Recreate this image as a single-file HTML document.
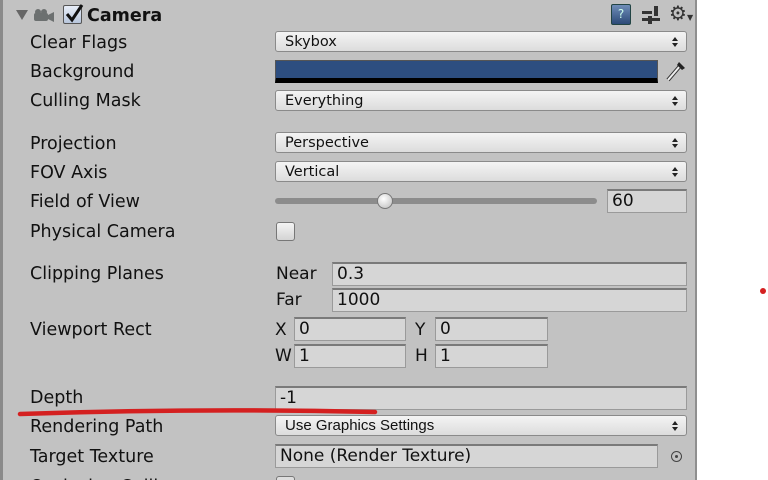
<!DOCTYPE html>
<html><head><meta charset="utf-8"><style>
*{margin:0;padding:0;box-sizing:border-box}
html,body{width:768px;height:480px;overflow:hidden}
body{background:#fff;position:relative;font-family:"DejaVu Sans","Liberation Sans",sans-serif;color:#111}
#panel{position:absolute;left:0;top:0;width:697px;height:480px;background:#c2c2c2;border-left:3px solid #8a8a8a;border-right:2px solid #8f8f8f}
.l{position:absolute;left:30px;font-size:17.5px;line-height:20px;white-space:nowrap}
.dd{position:absolute;left:275px;width:412px;height:21px;border:1px solid #8a8a8a;border-radius:3px;background:linear-gradient(#f4f4f4,#dcdcdc);font-size:14.5px;line-height:20px;padding-left:9px}
.dd:after{content:"";position:absolute;right:8px;top:5px;width:0;height:0;border-left:3px solid transparent;border-right:3px solid transparent;border-bottom:4px solid #222}
.dd:before{content:"";position:absolute;right:8px;top:11px;width:0;height:0;border-left:3px solid transparent;border-right:3px solid transparent;border-top:4px solid #222}
.f{position:absolute;height:24px;background:#d6d6d6;border:1px solid #9a9a9a;border-top:2px solid #7a7a7a;font-size:17px;line-height:21px;padding-left:4px}
.s{position:absolute;font-size:17px;line-height:20px}
</style></head><body>
<div id="panel"></div>
<div style="position:absolute;left:16px;top:10px;width:0;height:0;border-left:6px solid transparent;border-right:6px solid transparent;border-top:10px solid #666"></div>
<svg style="position:absolute;left:32px;top:8px" width="24" height="16"><rect x="2" y="5" width="14" height="8" rx="2" fill="#6c7070"/><circle cx="6" cy="4" r="3" fill="#6c7070"/><circle cx="12" cy="4" r="3" fill="#6c7070"/><path d="M16 7 L22 4 L22 14 L16 11Z" fill="#6c7070"/></svg>
<div style="position:absolute;left:63px;top:5px;width:19px;height:19px;border:1px solid #555;border-radius:2px;background:linear-gradient(#e8eef8,#b8c6dc)"></div>
<svg style="position:absolute;left:64px;top:3px" width="20" height="20"><path d="M3 11 L8 17 L18 2" stroke="#111" stroke-width="3" fill="none"/></svg>
<div style="position:absolute;left:87px;top:5px;font-size:17.5px;font-weight:bold;line-height:22px">Camera</div>
<div style="position:absolute;left:611px;top:4px;width:20px;height:21px;background:linear-gradient(#6f8db8,#2c4a78);border:1px solid #244;border-radius:2px;color:#cfe;font-size:12px;text-align:center;line-height:19px">?</div>
<svg style="position:absolute;left:640px;top:4px" width="22" height="22"><rect x="2" y="7" width="10" height="3" fill="#333"/><rect x="14" y="2" width="4" height="10" fill="#333"/><rect x="2" y="14" width="18" height="3" fill="#333"/><rect x="8" y="12" width="4" height="8" fill="#333"/></svg>
<div style="position:absolute;left:669px;top:1px;font-size:20px;color:#333;line-height:24px">⚙</div>
<div style="position:absolute;left:687px;top:13px;font-size:8px;color:#333">▼</div>

<div class="l" style="top:33px">Clear Flags</div><div class="dd" style="top:31px">Skybox</div>
<div class="l" style="top:62px">Background</div>
<div style="position:absolute;left:275px;top:60px;width:383px;height:23px;background:#2d4e80;border:1px solid #555;border-bottom:5px solid #000"></div>
<svg style="position:absolute;left:664px;top:58px" width="24" height="26"><path d="M4 22 L16 8" stroke="#333" stroke-width="4"/><path d="M4 22 L16 8" stroke="#eee" stroke-width="2"/><path d="M15 4 L21 10 L18 12 L13 7Z" fill="#222"/></svg>
<div class="l" style="top:91px">Culling Mask</div><div class="dd" style="top:90px">Everything</div>

<div class="l" style="top:134px">Projection</div><div class="dd" style="top:132px">Perspective</div>
<div class="l" style="top:163px">FOV Axis</div><div class="dd" style="top:161px">Vertical</div>
<div class="l" style="top:192px">Field of View</div>
<div style="position:absolute;left:275px;top:198px;width:322px;height:6px;border-radius:3px;background:#8c8c8c"></div>
<div style="position:absolute;left:377px;top:193px;width:16px;height:16px;border-radius:50%;background:radial-gradient(circle at 40% 35%,#fff,#bbb);border:1px solid #777"></div>
<div class="f" style="left:607px;top:189px;width:80px">60</div>
<div class="l" style="top:222px">Physical Camera</div>
<div style="position:absolute;left:276px;top:222px;width:19px;height:19px;border:1px solid #777;border-radius:3px;background:linear-gradient(#f4f4f4,#d4d4d4)"></div>

<div class="l" style="top:264px">Clipping Planes</div>
<div class="s" style="left:276px;top:264px">Near</div><div class="f" style="left:332px;top:262px;width:355px">0.3</div>
<div class="s" style="left:276px;top:290px">Far</div><div class="f" style="left:332px;top:288px;width:355px">1000</div>
<div class="l" style="top:320px">Viewport Rect</div>
<div class="s" style="left:275px;top:320px">X</div><div class="f" style="left:294px;top:317px;width:112px">0</div>
<div class="s" style="left:415px;top:320px">Y</div><div class="f" style="left:435px;top:317px;width:113px">0</div>
<div class="s" style="left:275px;top:346px">W</div><div class="f" style="left:294px;top:344px;width:112px">1</div>
<div class="s" style="left:415px;top:346px">H</div><div class="f" style="left:435px;top:344px;width:113px">1</div>

<div class="l" style="top:388px">Depth</div><div class="f" style="left:275px;top:386px;width:412px">-1</div>
<div class="l" style="top:417px">Rendering Path</div><div class="dd" style="top:415px;font-family:'Liberation Sans Narrow','Liberation Sans',sans-serif;font-size:15px">Use Graphics Settings</div>
<div class="l" style="top:447px">Target Texture</div><div class="f" style="left:275px;top:444px;width:383px">None (Render Texture)</div>
<div style="position:absolute;left:671px;top:451px;width:11px;height:11px;border:1.5px solid #444;border-radius:50%"></div>
<div style="position:absolute;left:675px;top:455px;width:3px;height:3px;background:#444;border-radius:50%"></div>
<div class="l" style="top:477px">Occlusion Culling</div>
<div style="position:absolute;left:276px;top:476px;width:19px;height:19px;border:1px solid #777;border-radius:3px;background:#ddd"></div>

<svg style="position:absolute;left:0;top:0" width="768" height="480"><path d="M20 414 Q200 408 375 412" stroke="#d42020" stroke-width="4.5" fill="none" stroke-linecap="round"/><circle cx="763" cy="291" r="3" fill="#d42020"/></svg>
</body></html>
